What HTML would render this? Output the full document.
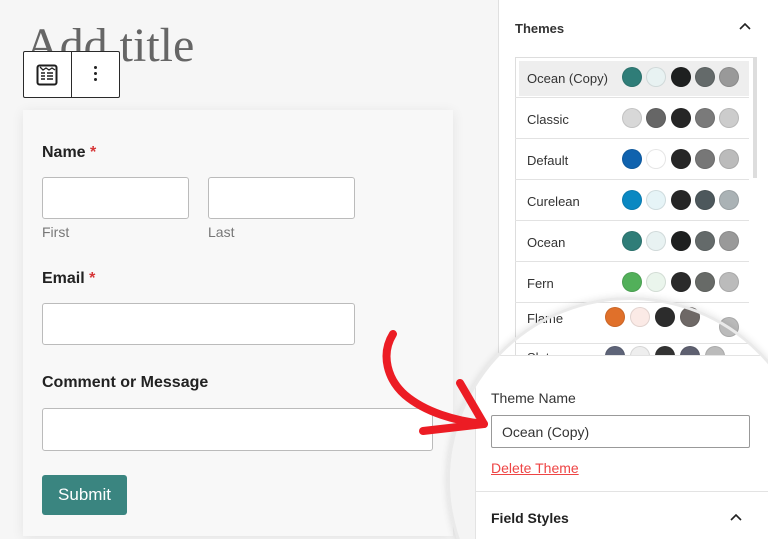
<!DOCTYPE html>
<html style="overflow:hidden;width:768px;height:539px"><head><meta charset="utf-8"><style>
*{box-sizing:border-box;margin:0;padding:0}
html,body{width:768px;height:539px;overflow:hidden}
body{background:#f6f6f6;font-family:"Liberation Sans",sans-serif;position:relative}
#w{position:absolute;left:0;top:0;width:768px;height:539px;overflow:hidden}
.a{position:absolute}
.title{left:25px;top:18px;font-family:"Liberation Serif",serif;font-size:48px;color:#666}
.tb{left:23px;top:51px;width:97px;height:47px;border:1px solid #2a2a2a;background:#fff;border-radius:2px}
.card{left:23px;top:110px;width:430px;height:426px;background:#f8f8f8;box-shadow:0 2px 12px rgba(0,0,0,.08)}
.lbl{font-weight:bold;font-size:16px;color:#222}
.lbl span{color:#d63638}
.in{background:#fff;border:1px solid #bbb;border-radius:3px}
.sub{font-size:14px;color:#777}
.side{left:498px;top:0;width:270px;height:539px;background:#fff;border-left:1px solid #e0e0e0}
.list{left:515px;top:57px;width:242px;height:300px;border:1px solid #ddd;border-right:none;overflow:hidden}
.row{position:absolute;left:0;width:234px;height:41px;border-bottom:1px solid #e2e2e2;font-size:13px;color:#333}
.row .t{position:absolute;left:12px;top:14px}
.dot{position:absolute;top:10px;width:20px;height:20px;border-radius:50%;border:1px solid rgba(0,0,0,.1)}
.circ{left:447px;top:297px;width:366px;height:366px;border-radius:50%;overflow:hidden;border:3px solid #eaeaea;box-shadow:0 0 8px rgba(0,0,0,.12)}
</style></head><body><div id="w">
<div class="a title">Add title</div>
<div class="a tb">
<svg class="a" style="left:11px;top:11px" width="24" height="24" viewBox="0 0 24 24"><rect x="2.5" y="2.5" width="19" height="19" rx="2" fill="none" stroke="#1e1e1e" stroke-width="2"/><path d="M5 4l3 3 3-2 3 2 3-2 3 2" fill="none" stroke="#1e1e1e" stroke-width="1.3"/><path d="M6 10h4M12 10h6M6 13h4M12 13h6M6 16h4M12 16h6" stroke="#1e1e1e" stroke-width="1.5"/></svg>
<div class="a" style="left:47px;top:0;width:1px;height:45px;background:#2a2a2a"></div>
<div class="a" style="left:70px;top:14px;width:3px;height:3px;background:#222;border-radius:50%;box-shadow:0 6px 0 #222,0 12px 0 #222"></div>
</div>
<div class="a card"></div>
<div class="a lbl" style="left:42px;top:144px">Name <span>*</span></div>
<div class="a in" style="left:42px;top:177px;width:147px;height:42px"></div>
<div class="a in" style="left:208px;top:177px;width:147px;height:42px"></div>
<div class="a sub" style="left:42px;top:224px">First</div>
<div class="a sub" style="left:208px;top:224px">Last</div>
<div class="a lbl" style="left:42px;top:270px">Email <span>*</span></div>
<div class="a in" style="left:42px;top:303px;width:313px;height:42px"></div>
<div class="a lbl" style="left:42px;top:374px">Comment or Message</div>
<div class="a in" style="left:42px;top:408px;width:391px;height:43px"></div>
<div class="a" style="left:42px;top:475px;width:85px;height:40px;background:#3a8580;border-radius:3px;color:#fff;font-size:17px;text-align:center;line-height:40px">Submit</div>

<div class="a side"></div>
<div class="a" style="left:515px;top:21px;font-size:13px;font-weight:bold;color:#333">Themes</div>
<svg class="a" style="left:739px;top:23px" width="12" height="8"><path d="M1 6l5-5 5 5" fill="none" stroke="#222" stroke-width="1.6"/></svg>
<div class="a list">
<div class="a" style="left:3px;top:3px;width:230px;height:35px;background:#eee"></div>
<div class="a" style="right:0;top:0;width:4px;height:120px;background:#ddd"></div>
</div>
<div class="a list" style="background:transparent;border:none">
<div class="row" style="top:0;border:none"><span class="t">Ocean (Copy)</span><i class="dot" style="left:107px;background:#2f7d78"></i><i class="dot" style="left:131px;background:#e8f2f2"></i><i class="dot" style="left:156px;background:#1e2020"></i><i class="dot" style="left:180px;background:#646a6a"></i><i class="dot" style="left:204px;background:#999"></i></div>
<div class="row" style="top:0;height:41px"></div>
<div class="row" style="top:41px"><span class="t">Classic</span><i class="dot" style="left:107px;background:#d8d8d8"></i><i class="dot" style="left:131px;background:#666"></i><i class="dot" style="left:156px;background:#262626"></i><i class="dot" style="left:180px;background:#7a7a7a"></i><i class="dot" style="left:204px;background:#ccc"></i></div>
<div class="row" style="top:82px"><span class="t">Default</span><i class="dot" style="left:107px;background:#0f62ae"></i><i class="dot" style="left:131px;background:#fff"></i><i class="dot" style="left:156px;background:#262626"></i><i class="dot" style="left:180px;background:#777"></i><i class="dot" style="left:204px;background:#bbb"></i></div>
<div class="row" style="top:123px"><span class="t">Curelean</span><i class="dot" style="left:107px;background:#0a88c2"></i><i class="dot" style="left:131px;background:#e6f4f7"></i><i class="dot" style="left:156px;background:#262626"></i><i class="dot" style="left:180px;background:#4d585c"></i><i class="dot" style="left:204px;background:#aab2b5"></i></div>
<div class="row" style="top:164px"><span class="t">Ocean</span><i class="dot" style="left:107px;background:#2f7d78"></i><i class="dot" style="left:131px;background:#e8f2f2"></i><i class="dot" style="left:156px;background:#1e2020"></i><i class="dot" style="left:180px;background:#646a6a"></i><i class="dot" style="left:204px;background:#999"></i></div>
<div class="row" style="top:205px"><span class="t">Fern</span><i class="dot" style="left:107px;background:#52b05a"></i><i class="dot" style="left:131px;background:#eaf5ec"></i><i class="dot" style="left:156px;background:#2a2a2a"></i><i class="dot" style="left:180px;background:#676a67"></i><i class="dot" style="left:204px;background:#bbb"></i></div>
<div class="row" style="top:246px"><span class="t" style="top:8px">Flame</span><i class="dot" style="left:90px;top:4px;background:#e0702a"></i><i class="dot" style="left:115px;top:4px;background:#fbeae6"></i><i class="dot" style="left:140px;top:4px;background:#2c2c2c"></i><i class="dot" style="left:165px;top:4px;background:#6e6866"></i><i class="dot" style="left:204px;top:14px;background:#bbb"></i></div>
<div class="row" style="top:287px"><span class="t" style="top:6px">Slate</span><i class="dot" style="left:90px;top:2px;background:#5e6478"></i><i class="dot" style="left:115px;top:2px;background:#eee"></i><i class="dot" style="left:140px;top:2px;background:#333"></i><i class="dot" style="left:165px;top:2px;background:#5e6070"></i><i class="dot" style="left:190px;top:2px;background:#bbb"></i></div>
</div>

<div class="a circ">
<div class="a" style="left:-450px;top:55px;width:1000px;height:400px;background:#f4f4f4"></div>
<div class="a" style="left:25px;top:55px;width:400px;height:400px;background:#fff;border-left:1px solid #e3e3e3;border-top:1px solid #e3e3e3"></div>
<div class="a" style="left:41px;top:90px;font-size:14px;color:#333">Theme Name</div>
<div class="a" style="left:41px;top:115px;width:259px;height:33px;border:1px solid #999;border-radius:2px;font-size:14px;color:#333;padding:8px 10px">Ocean (Copy)</div>
<div class="a" style="left:41px;top:160px;font-size:14px;color:#e44;text-decoration:underline">Delete Theme</div>
<div class="a" style="left:25px;top:191px;width:400px;height:1px;background:#e3e3e3"></div>
<div class="a" style="left:41px;top:210px;font-size:14px;font-weight:bold;color:#222">Field Styles</div>
<svg class="a" style="left:280px;top:214px" width="12" height="8"><path d="M1 6l5-5 5 5" fill="none" stroke="#222" stroke-width="1.6"/></svg>
</div>

<svg class="a" style="left:0;top:0" width="768" height="539"><path d="M393 334C380 355 388 380 405 395C425 412 455 421 484 424" fill="none" stroke="#ec1c24" stroke-width="8" stroke-linecap="round"/><path d="M460 383L484 424L423 431" fill="none" stroke="#ec1c24" stroke-width="8" stroke-linecap="round" stroke-linejoin="round"/></svg>
</div></body></html>
